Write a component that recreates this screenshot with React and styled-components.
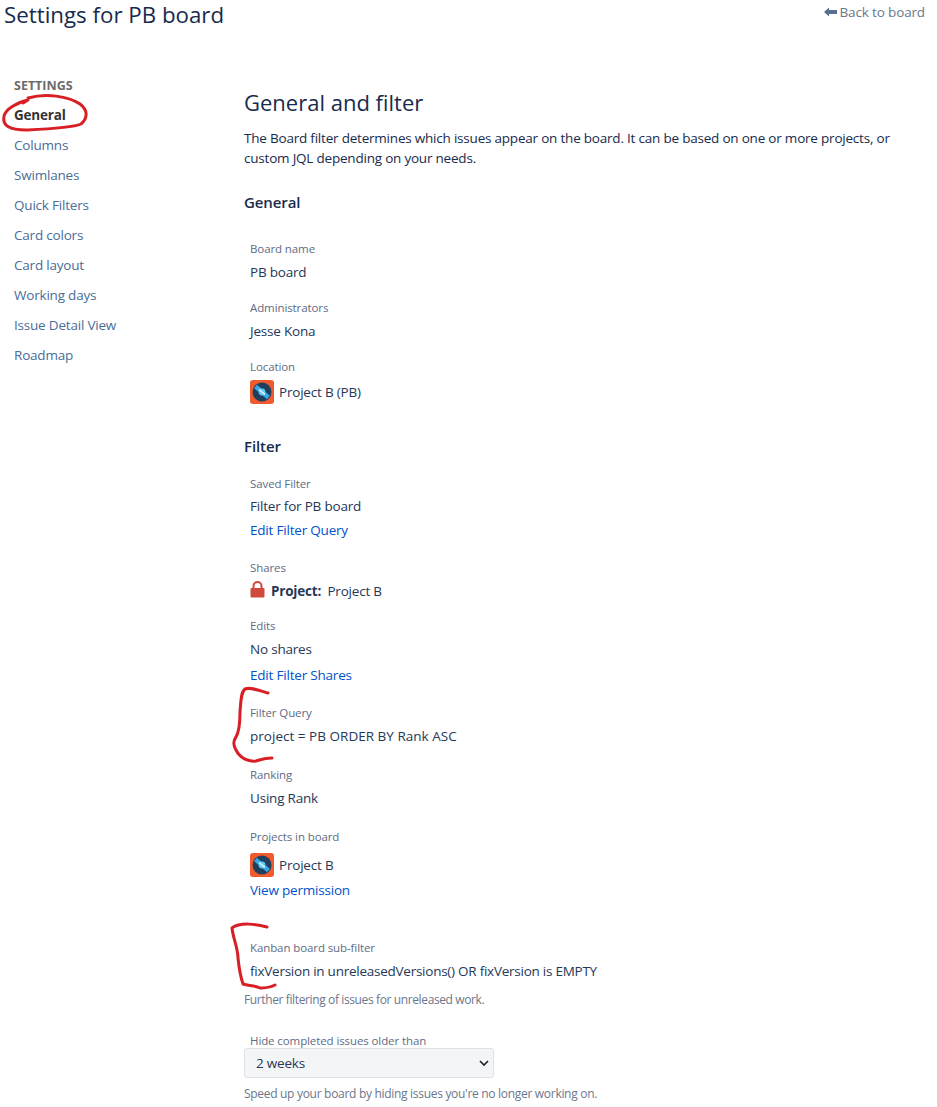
import styled, { createGlobalStyle } from "styled-components";

const GlobalStyle = createGlobalStyle`
  html, body {
    margin: 0;
    padding: 0;
    background: #fff;
  }
  body {
    font-family: "Open Sans", "Noto Sans", "Liberation Sans", sans-serif;
    color: #172b4d;
    font-size: 14px;
    line-height: 20px;
  }
`;

const Page = styled.div`
  position: relative;
  width: 937px;
  height: 1107px;
  overflow: hidden;
`;

const Header = styled.header`
  display: flex;
  justify-content: space-between;
  align-items: flex-start;
  padding: 0 12px 0 4px;
  height: 68px;
`;

const PageTitle = styled.h1`
  margin: 0;
  font-size: 22.3px;
  font-weight: 400;
  line-height: 30px;
  color: #172b4d;
`;

const BackLink = styled.a`
  display: flex;
  align-items: center;
  gap: 3px;
  font-size: 13.5px;
  line-height: 24px;
  color: #6b778c;
  letter-spacing: -0.15px;
`;

const Columns = styled.div`
  display: flex;
`;

const Sidebar = styled.nav`
  width: 230px;
  padding: 10px 0 0 14px;
  flex-shrink: 0;
`;

const SideHeading = styled.div`
  font-size: 12.5px;
  font-weight: 700;
  line-height: 16px;
  color: #6b6b6b;
  margin-bottom: 6px;
`;

const SideItem = styled.div`
  height: 30px;
  line-height: 30px;
  font-size: 13.5px;
  letter-spacing: -0.2px;
  font-weight: ${(p) => (p.$active ? 700 : 400)};
  color: ${(p) => (p.$active ? "#333" : "#4a6d99")};
`;

const Main = styled.main`
  width: 660px;
  padding-top: 19px;
`;

const MainTitle = styled.h2`
  margin: 0 0 11px;
  font-size: 22px;
  font-weight: 400;
  line-height: 30px;
  color: #172b4d;
`;

const Intro = styled.p`
  margin: 0;
  font-size: 13.5px;
  line-height: 20px;
  letter-spacing: -0.21px;
  color: #172b4d;
`;

const SectionTitle = styled.h3`
  margin: ${(p) => p.$top}px 0 0;
  font-size: 15px;
  font-weight: 600;
  line-height: 20px;
  letter-spacing: -0.1px;
  color: #172b4d;
`;

const Field = styled.div`
  margin-top: ${(p) => p.$top}px;
  padding-left: 6px;
`;

const Label = styled.div`
  font-size: 11.5px;
  line-height: 16px;
  font-weight: 500;
  letter-spacing: -0.1px;
  color: #5e6c84;
  margin-bottom: ${(p) => p.$gap ?? 5}px;
`;

const Value = styled.div`
  display: flex;
  align-items: center;
  font-size: 13.5px;
  line-height: 20px;
  letter-spacing: ${(p) => p.$track ?? -0.2}px;
  white-space: pre;
  color: #253858;
`;

const ProjectRow = styled(Value)`
  gap: 5px;
  height: 24px;
`;

const Strong = styled.strong`
  font-weight: 700;
  margin-right: 3px;
`;

const EditLink = styled.a`
  display: block;
  margin-top: ${(p) => p.$top ?? 4}px;
  font-size: 13.5px;
  line-height: 20px;
  letter-spacing: -0.2px;
  color: #0052cc;
`;

const Hint = styled.div`
  margin: ${(p) => p.$top}px 0 0 -6px;
  font-size: 12px;
  line-height: 16px;
  letter-spacing: ${(p) => p.$track ?? -0.32}px;
  color: #6b778c;
`;

const SelectBox = styled.div`
  width: 250px;
  height: 30px;
  margin-left: -6px;
  padding: 0 3px 0 11px;
  box-sizing: border-box;
  display: flex;
  align-items: center;
  justify-content: space-between;
  background: #f4f5f7;
  border: 1px solid #dfe1e6;
  border-radius: 3px;
  font-size: 13.5px;
  letter-spacing: -0.2px;
  color: #253858;
`;

const Scribble = styled.svg`
  position: absolute;
  left: 0;
  top: 0;
  pointer-events: none;
`;

const LockIcon = styled.svg`
  margin-right: 6px;
  margin-top: -4px;
`;

function ProjectAvatar() {
  return (
    <svg width="24" height="24" viewBox="0 0 24 24">
      <rect width="24" height="24" rx="3" fill="#ef5a2e" />
      <circle cx="12" cy="12" r="9.5" fill="#1f3f5f" />
      <path d="M5.5 6.5 L18.5 17.5" stroke="#35a8e6" strokeWidth="4.4" />
      <circle cx="12" cy="12" r="3.4" fill="#62c9f4" />
      <path d="M9 9.6 L15 14.4" stroke="#eef8fd" strokeWidth="1.3" />
    </svg>
  );
}

function Lock() {
  return (
    <LockIcon width="15" height="17" viewBox="0 0 15 17">
      <path d="M3.5 8 V5 a4 4 0 0 1 8 0 V8" fill="none" stroke="#cf4a3c" strokeWidth="2" />
      <rect x="0.5" y="7" width="14" height="9.5" rx="1" fill="#cf4a3c" />
    </LockIcon>
  );
}

const navItems = [
  "Columns",
  "Swimlanes",
  "Quick Filters",
  "Card colors",
  "Card layout",
  "Working days",
  "Issue Detail View",
  "Roadmap",
];

export default function App() {
  return (
    <Page>
      <GlobalStyle />
      <Header>
        <PageTitle>Settings for PB board</PageTitle>
        <BackLink>
          <svg width="13" height="10" viewBox="0 0 13 10">
            <path d="M0 5 L5 0.5 V3 H13 V7 H5 V9.5 Z" fill="#5a6f8f" />
          </svg>
          Back to board
        </BackLink>
      </Header>
      <Columns>
        <Sidebar>
          <SideHeading>SETTINGS</SideHeading>
          <SideItem $active>General</SideItem>
          {navItems.map((item) => (
            <SideItem key={item}>{item}</SideItem>
          ))}
        </Sidebar>
        <Main>
          <MainTitle>General and filter</MainTitle>
          <Intro>
            The Board filter determines which issues appear on the board. It can be based on one or more projects, or
            <br />
            custom JQL depending on your needs.
          </Intro>
          <SectionTitle $top={24}>General</SectionTitle>
          <Field $top={29}>
            <Label>Board name</Label>
            <Value>PB board</Value>
          </Field>
          <Field $top={18}>
            <Label>Administrators</Label>
            <Value>Jesse Kona</Value>
          </Field>
          <Field $top={18}>
            <Label>Location</Label>
            <ProjectRow>
              <ProjectAvatar />
              Project B (PB)
            </ProjectRow>
          </Field>
          <SectionTitle $top={32}>Filter</SectionTitle>
          <Field $top={20}>
            <Label $gap={4}>Saved Filter</Label>
            <Value>Filter for PB board</Value>
            <EditLink>Edit Filter Query</EditLink>
          </Field>
          <Field $top={20}>
            <Label>Shares</Label>
            <Value>
              <Lock />
              <Strong>Project:</Strong> Project B
            </Value>
          </Field>
          <Field $top={17}>
            <Label>Edits</Label>
            <Value>No shares</Value>
            <EditLink $top={6}>Edit Filter Shares</EditLink>
          </Field>
          <Field $top={20}>
            <Label>Filter Query</Label>
            <Value $track={0.02}>project = PB ORDER BY Rank ASC</Value>
          </Field>
          <Field $top={21}>
            <Label>Ranking</Label>
            <Value>Using Rank</Value>
          </Field>
          <Field $top={21}>
            <Label $gap={8}>Projects in board</Label>
            <ProjectRow>
              <ProjectAvatar />
              Project B
            </ProjectRow>
            <EditLink $top={3}>View permission</EditLink>
          </Field>
          <Field $top={40}>
            <Label>Kanban board sub-filter</Label>
            <Value $track={-0.25}>fixVersion in unreleasedVersions() OR fixVersion is EMPTY</Value>
            <Hint $top={11} $track={-0.38}>Further filtering of issues for unreleased work.</Hint>
          </Field>
          <Field $top={25}>
            <Label $gap={-1}>Hide completed issues older than</Label>
            <SelectBox>
              2 weeks
              <svg width="12" height="12" viewBox="0 0 12 12">
                <path d="M2 4 L6 8 L10 4" fill="none" stroke="#222" strokeWidth="1.6" />
              </svg>
            </SelectBox>
            <Hint $top={8} $track={-0.3}>Speed up your board by hiding issues you're no longer working on.</Hint>
          </Field>
        </Main>
      </Columns>
      <Scribble width="937" height="1107" viewBox="0 0 937 1107">
        <g fill="none" stroke="#d81f26" strokeWidth="3" strokeLinecap="round" strokeLinejoin="round">
          <path d="M23 103 L28 100 C16 103 6 109 4 116 C2 126 10 130 26 130 C48 129 72 128 81 124 C88 118 88 110 80 104 C68 96 46 93 28 98" />
          <path d="M268 693 C258 690 250 687 245 689 C241 692 241 700 240 712 C240 722 239 732 236 737 C233 741 233 745 236 750 C240 758 248 762 256 761 C262 759 267 758 272 758" />
          <path d="M267 927 C256 924 240 922 232 928 C233 938 238 948 238 958 C239 968 241 978 243 984 C248 986 254 985 260 988 C266 988 271 987 275 985" />
        </g>
      </Scribble>
    </Page>
  );
}
